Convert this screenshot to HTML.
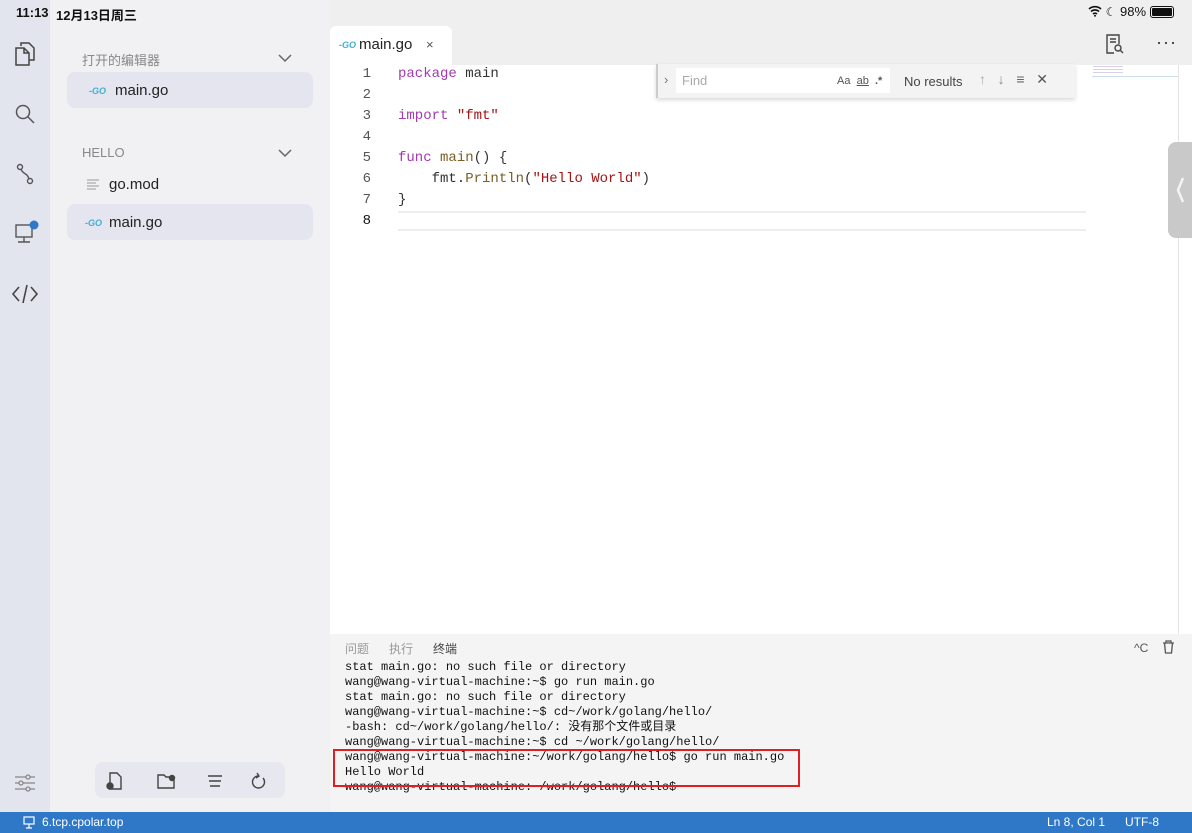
<!DOCTYPE html>
<html><head><meta charset="utf-8"><style>
*{margin:0;padding:0;box-sizing:border-box}
body{width:1192px;height:833px;overflow:hidden;font-family:"Liberation Sans","Noto Sans CJK SC",sans-serif;background:#f1f1f3;position:relative;color:#333}
.abs{position:absolute}
.mono{font-family:"Liberation Mono","Noto Sans CJK SC",monospace}
#act{left:0;top:0;width:50px;height:812px;background:#e3e5ee}
#side{left:50px;top:0;width:280px;height:812px;background:#f1f1f4}
#tabs{left:330px;top:0;width:862px;height:65px;background:#efefef}
#ed{left:330px;top:65px;width:862px;height:569px;background:#fff}
#term{left:330px;top:634px;width:862px;height:178px;background:#f4f4f4}
#status{left:0;top:812px;width:1192px;height:21px;background:#2f78c8;color:#fff;font-size:12px}
.sel{background:#e4e5ef;border-radius:8px}
.ln{color:#555;font-size:14px;width:40px;text-align:right}
.code{font-size:14px;color:#333;white-space:pre}
.kw{color:#a33ab0}.str{color:#a31515}.fn{color:#795e26}
.tl{font-size:12px;color:#111;white-space:pre;line-height:15px}
</style></head><body>
<div id="act" class="abs"></div>
<div id="side" class="abs"></div>
<div id="tabs" class="abs"></div>
<div id="ed" class="abs"></div>
<div id="term" class="abs"></div>

<div class="abs" style="left:16px;top:5px;font-size:13px;font-weight:bold;color:#111">11:13</div>
<div class="abs" style="left:56px;top:5px;font-size:13px;font-weight:bold;color:#111">12月13日周三</div>
<div class="abs" style="left:1088px;top:4px;font-size:13px;color:#111">
<svg width="14" height="12" viewBox="0 0 14 12" style="vertical-align:-1px"><path d="M1 4a9 9 0 0 1 12 0M3 6.5a6 6 0 0 1 8 0M5 9a3 3 0 0 1 4 0" stroke="#111" stroke-width="1.6" fill="none"/><circle cx="7" cy="10.8" r="1" fill="#111"/></svg>
<span style="font-size:12px">☾</span> 98%</div>
<div class="abs" style="left:1150px;top:6px;width:24px;height:12px;border:1.5px solid #111;border-radius:3px;padding:1px"><div style="background:#111;width:100%;height:100%;border-radius:1px"></div></div>

<svg class="abs" style="left:14px;top:41px" width="22" height="26" viewBox="0 0 22 26" fill="none" stroke="#444" stroke-width="1.5"><path d="M7 5V2h8l5 5v12h-5"/><path d="M2 7h8l5 5v12H2z"/><path d="M10 7v5h5"/></svg>
<svg class="abs" style="left:15px;top:104px" width="20" height="20" fill="none" stroke="#555" stroke-width="1.5"><circle cx="8" cy="8" r="6.5"/><path d="M13 13l6 6"/></svg>
<svg class="abs" style="left:16px;top:163px" width="20" height="22" fill="none" stroke="#555" stroke-width="1.4"><circle cx="4" cy="4" r="2.5"/><circle cx="14" cy="18" r="2.5"/><path d="M5 6c2 6 6 3 8 10"/></svg>
<svg class="abs" style="left:15px;top:220px" width="24" height="26" fill="none" stroke="#555" stroke-width="1.4"><rect x="1" y="5" width="16" height="12"/><path d="M9 17v5M3 22h12"/><circle cx="19" cy="5" r="4.5" fill="#2f78c8" stroke="none"/></svg>
<svg class="abs" style="left:11px;top:284px" width="28" height="20" fill="none" stroke="#444" stroke-width="1.6"><path d="M8 3L2 10l6 7M20 3l6 7-6 7M16 1l-4 18"/></svg>
<svg class="abs" style="left:14px;top:773px" width="22" height="20" fill="none" stroke="#888" stroke-width="1.3"><path d="M1 4h20M1 10h20M1 16h20"/><circle cx="14" cy="4" r="2" fill="#e3e5ee"/><circle cx="7" cy="10" r="2" fill="#e3e5ee"/><circle cx="14" cy="16" r="2" fill="#e3e5ee"/></svg>

<div class="abs" style="left:82px;top:50px;font-size:13px;color:#888">打开的编辑器</div>
<svg class="abs" style="left:278px;top:54px" width="14" height="9" fill="none" stroke="#666" stroke-width="1.5"><path d="M1 1l6 6 6-6"/></svg>
<div class="abs sel" style="left:67px;top:72px;width:246px;height:36px"></div>
<div class="abs" style="left:89px;top:86px;font-size:9px;font-weight:bold;color:#3fb0d0;font-style:italic">-GO</div>
<div class="abs" style="left:115px;top:82px;font-size:15px;color:#222">main.go</div>
<div class="abs" style="left:82px;top:145px;font-size:13px;color:#888">HELLO</div>
<svg class="abs" style="left:278px;top:149px" width="14" height="9" fill="none" stroke="#666" stroke-width="1.5"><path d="M1 1l6 6 6-6"/></svg>
<svg class="abs" style="left:87px;top:179px" width="13" height="12" stroke="#999" stroke-width="1"><path d="M0 1h12M0 4h9M0 7h12M0 10h9"/></svg>
<div class="abs" style="left:109px;top:176px;font-size:15px;color:#222">go.mod</div>
<div class="abs sel" style="left:67px;top:204px;width:246px;height:36px"></div>
<div class="abs" style="left:85px;top:218px;font-size:9px;font-weight:bold;color:#3fb0d0;font-style:italic">-GO</div>
<div class="abs" style="left:109px;top:214px;font-size:15px;color:#222">main.go</div>

<div class="abs" style="left:95px;top:762px;width:190px;height:36px;background:#e6e7ef;border-radius:8px"></div>
<svg class="abs" style="left:106px;top:771px" width="170" height="20" fill="none" stroke="#444" stroke-width="1.4"><path d="M4 2h7l4 4v12H4z"/><circle cx="4" cy="15" r="3" fill="#444"/><path d="M52 4h6l2 2h8v11H52z"/><circle cx="66" cy="7" r="2.5" fill="#444"/><path d="M102 5h14M103 10h12M104 15h10"/><path d="M153 5a6 6 0 1 0 4 2"/><path d="M151 2l2 3-3 2"/></svg>

<div class="abs" style="left:330px;top:26px;width:122px;height:39px;background:#fff;border-radius:6px 6px 0 0"></div>
<div class="abs" style="left:339px;top:40px;font-size:9px;font-weight:bold;color:#3fb0d0;font-style:italic">-GO</div>
<div class="abs" style="left:359px;top:36px;font-size:15px;color:#222">main.go</div>
<div class="abs" style="left:426px;top:37px;font-size:13px;color:#555">×</div>
<svg class="abs" style="left:1105px;top:34px" width="20" height="22" fill="none" stroke="#444" stroke-width="1.4"><path d="M9 19H2V1h12v9"/><path d="M5 5h6M5 8h6"/><circle cx="13" cy="14" r="3"/><path d="M15 16l3 3"/></svg>
<div class="abs" style="left:1156px;top:32px;font-size:18px;color:#333;letter-spacing:1px">···</div>

<div class="abs mono ln" style="left:331px;top:64px;line-height:21px">1<br>2<br>3<br>4<br>5<br>6<br>7<br><span style="color:#111">8</span></div>
<div class="abs" style="left:398px;top:211px;width:688px;height:20px;border-top:2px solid #eee;border-bottom:2px solid #eee"></div>
<div class="abs mono code" style="left:398px;top:64px;line-height:21px"><span class="kw">package</span> main

<span class="kw">import</span> <span class="str">"fmt"</span>

<span class="kw">func</span> <span class="fn">main</span>() {
    fmt.<span class="fn">Println</span>(<span class="str">"Hello World"</span>)
}</div>

<div class="abs" style="left:656px;top:64px;width:419px;height:34px;background:#f3f3f3;box-shadow:0 2px 4px rgba(0,0,0,.15);border-left:2px solid #ccc"></div>
<div class="abs" style="left:664px;top:72px;font-size:13px;color:#777">›</div>
<div class="abs" style="left:676px;top:68px;width:214px;height:25px;background:#fff"></div>
<div class="abs" style="left:682px;top:73px;font-size:13px;color:#aaa">Find</div>
<div class="abs" style="left:837px;top:75px;font-size:11px;color:#555">Aa&nbsp;&nbsp;<u>ab</u>&nbsp;&nbsp;<b>.*</b></div>
<div class="abs" style="left:904px;top:74px;font-size:13px;color:#444">No results</div>
<div class="abs" style="left:979px;top:71px;font-size:14px;color:#aaa">↑&nbsp;&nbsp; <span style="color:#888">↓</span>&nbsp;&nbsp; <span style="color:#666">≡</span>&nbsp;&nbsp; <span style="color:#555">✕</span></div>

<div class="abs" style="left:1092px;top:65px;width:86px;height:12px;border-bottom:1px solid #cde"></div>
<div class="abs" style="left:1093px;top:66px;width:30px;height:8px;background:repeating-linear-gradient(#d8d0e8 0 1px,transparent 1px 3px)"></div>
<div class="abs" style="left:1178px;top:65px;width:1px;height:569px;background:#e4e4e4"></div>
<div class="abs" style="left:1168px;top:142px;width:24px;height:96px;background:#c9c9c9;border-radius:8px 0 0 8px"></div>
<svg class="abs" style="left:1175px;top:176px" width="10" height="28" fill="none" stroke="#f4f4f4" stroke-width="2.5"><path d="M8 2L3 14l5 12"/></svg>

<div class="abs" style="left:345px;top:640px;font-size:12px;color:#999">问题&nbsp;&nbsp;&nbsp;&nbsp;&nbsp;&nbsp;执行&nbsp;&nbsp;&nbsp;&nbsp;&nbsp;&nbsp;<span style="color:#444">终端</span></div>
<div class="abs" style="left:1134px;top:641px;font-size:12px;color:#555">^C</div>
<svg class="abs" style="left:1162px;top:640px" width="13" height="14" fill="none" stroke="#555" stroke-width="1.3"><path d="M1 3h11M4 3V1h5v2M2.5 3l1 10h6l1-10"/></svg>
<div class="abs mono tl" style="left:345px;top:660px">stat main.go: no such file or directory
wang@wang-virtual-machine:~$ go run main.go
stat main.go: no such file or directory
wang@wang-virtual-machine:~$ cd~/work/golang/hello/
-bash: cd~/work/golang/hello/: 没有那个文件或目录
wang@wang-virtual-machine:~$ cd ~/work/golang/hello/
wang@wang-virtual-machine:~/work/golang/hello$ go run main.go
Hello World
wang@wang-virtual-machine:~/work/golang/hello$</div>
<div class="abs" style="left:333px;top:749px;width:467px;height:38px;border:2px solid #e02020"></div>

<div id="status" class="abs">
<svg class="abs" style="left:23px;top:4px" width="12" height="13" fill="none" stroke="#fff" stroke-width="1.2"><rect x="1" y="1" width="10" height="7"/><path d="M6 8v4M3 12h6"/></svg>
<div class="abs" style="left:42px;top:3px">6.tcp.cpolar.top</div>
<div class="abs" style="left:1047px;top:3px">Ln 8, Col 1</div>
<div class="abs" style="left:1125px;top:3px">UTF-8</div>
</div>
</body></html>
